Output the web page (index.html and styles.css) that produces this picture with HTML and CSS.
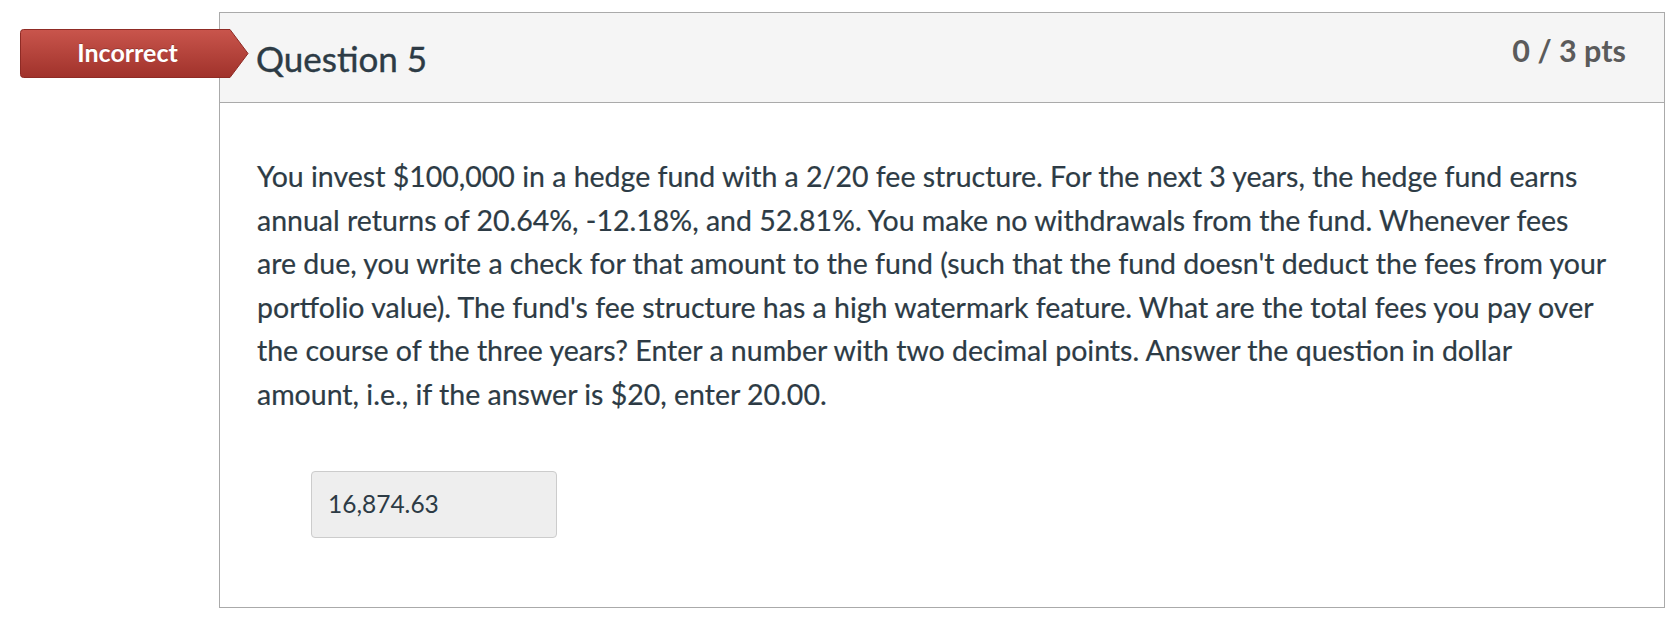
FILE: index.html
```html
<!DOCTYPE html>
<html>
<head>
<meta charset="utf-8">
<link rel="stylesheet" href="styles.css">
</head>
<body>
<div class="page">
  <div class="gutter"></div>
  <div class="question">
    <div class="badge">
      <svg class="badge-bg" width="229" height="50" viewBox="0 0 229 50">
        <defs>
          <linearGradient id="rg" x1="0" y1="0" x2="0" y2="1">
            <stop offset="0" stop-color="#c9554c"/>
            <stop offset="1" stop-color="#a0322b"/>
          </linearGradient>
        </defs>
        <path d="M3.5 0.5 H210 L228 24.5 L210 48.5 H3.5 Q0.5 48.5 0.5 45.5 V3.5 Q0.5 0.5 3.5 0.5 Z" fill="url(#rg)" stroke="#8f2b25" stroke-width="1"/>
      </svg>
      <span class="badge-text">Incorrect</span>
    </div>
    <div class="header">
      <h2 class="title">Question 5</h2>
      <div class="points">0 / 3 pts</div>
    </div>
    <div class="content">
      <p class="text">You invest $100,000 in a hedge fund with a 2/20 fee structure. For the next 3 years, the hedge fund earns annual returns of 20.64%, -12.18%, and 52.81%. You make no withdrawals from the fund. Whenever fees<br>are due, you write a check for that amount to the fund (such that the fund doesn't deduct the fees from your portfolio value). The fund's fee structure has a high watermark feature. What are the total fees you pay over the course of the three years? Enter a number with two decimal points. Answer the question in dollar amount, i.e., if the answer is $20, enter 20.00.</p>
      <div class="answer">16,874.63</div>
    </div>
  </div>
</div>
</body>
</html>
```
FILE: styles.css
```css
html, body {
  margin: 0;
  padding: 0;
  background: #fff;
}
body {
  font-family: Lato, "Open Sans", sans-serif;
  color: #2d3b45;
}
.page {
  display: flex;
  padding-top: 12px;
}
.gutter {
  width: 219px;
  flex: none;
}
.question {
  position: relative;
  width: 1444px;
  height: 594px;
  border: 1px solid #aaaaaa;
  box-sizing: content-box;
}
.badge {
  position: absolute;
  left: -200px;
  top: 16px;
  width: 229px;
  height: 50px;
}
.badge-bg {
  position: absolute;
  left: 0;
  top: 0;
  display: block;
}
.badge-text {
  position: relative;
  display: block;
  width: 215px;
  text-align: center;
  color: #fff;
  font-weight: bold;
  font-size: 25px;
  line-height: 46px;
  text-shadow: 0 -1px 0 rgba(0,0,0,0.2);
}
.header {
  display: flex;
  justify-content: space-between;
  align-items: flex-start;
  height: 89px;
  background: #f5f5f5;
  border-bottom: 1px solid #aaaaaa;
  padding: 0 38px 0 36px;
}
.title {
  margin: 0;
  padding-top: 24px;
  font-size: 35px;
  font-weight: normal;
  line-height: 42px;
  color: #2d3b45;
  -webkit-text-stroke: 0.4px #2d3b45;
}
.points {
  padding-top: 17px;
  font-size: 30.5px;
  font-weight: bold;
  color: #5b5b5b;
  line-height: 40px;
}
.content {
  padding: 52px 30px 0 37px;
}
.text {
  margin: 0;
  width: 1355px;
  font-size: 28.5px;
  line-height: 43.5px;
  color: #2d3b45;
  -webkit-text-stroke: 0.2px #2d3b45;
}
.answer {
  margin: 55px 0 0 54px;
  width: 228px;
  height: 65px;
  box-sizing: content-box;
  padding: 0 0 0 16px;
  background: #eeeeee;
  border: 1px solid #cccccc;
  border-radius: 4px;
  font-size: 24.5px;
  line-height: 63px;
  color: #2d3b45;
}
```
